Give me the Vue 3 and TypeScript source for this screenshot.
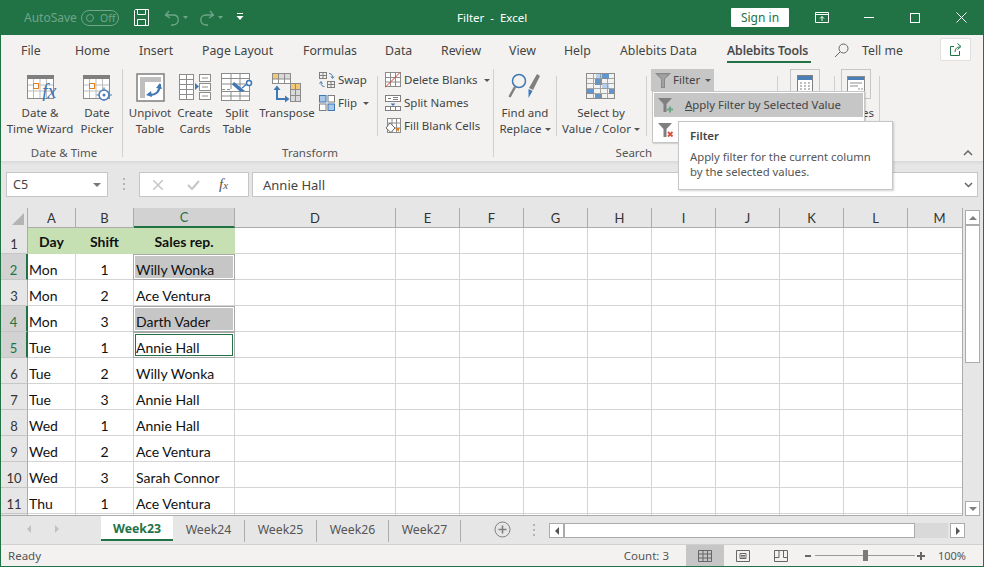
<script setup lang="ts">
interface Row { n: number; a: string; b: string; c: string; mark?: string; sel?: boolean }
const tabs = ['File','Home','Insert','Page Layout','Formulas','Data','Review','View','Help','Ablebits Data','Ablebits Tools']
const columns = ['A','B','C','D','E','F','G','H','I','J','K','L','M']
const rows: Row[] = [
  { n: 2, a: 'Mon', b: '1', c: 'Willy Wonka', mark: 'hit', sel: true },
  { n: 3, a: 'Mon', b: '2', c: 'Ace Ventura' },
  { n: 4, a: 'Mon', b: '3', c: 'Darth Vader', mark: 'hit', sel: true },
  { n: 5, a: 'Tue', b: '1', c: 'Annie Hall', mark: 'active', sel: true },
  { n: 6, a: 'Tue', b: '2', c: 'Willy Wonka' },
  { n: 7, a: 'Tue', b: '3', c: 'Annie Hall' },
  { n: 8, a: 'Wed', b: '1', c: 'Annie Hall' },
  { n: 9, a: 'Wed', b: '2', c: 'Ace Ventura' },
  { n: 10, a: 'Wed', b: '3', c: 'Sarah Connor' },
  { n: 11, a: 'Thu', b: '1', c: 'Ace Ventura' },
]
const blanks = 10
const sheets = ['Week24','Week25','Week26','Week27']
</script>

<template>
  <div class="window">
    <header class="title">
      <div class="qat">
        <span class="autosave">AutoSave</span>
        <span class="toggle"><i></i><b>Off</b></span>
        <svg class="save" width="17" height="17" viewBox="0 0 17 17" fill="none" stroke="#fff"><path d="M2.500.5h13v16h-14v-15zM4.500.5v5h8v-5M4.500 16.500v-6h8v6"/></svg>
        <svg class="undo" width="24" height="16" viewBox="0 0 24 16" fill="none" stroke="#6fa58a" stroke-width="1.300"><path d="M5 1 1.500 5 6 8M2 5h7c7 0 7 9 0 10H7"/><path d="M19 6h5l-2.500 3z" fill="#6fa58a" stroke="none"/></svg>
        <svg class="redo" width="24" height="16" viewBox="0 0 24 16" fill="none" stroke="#6fa58a" stroke-width="1.300"><path d="M11 1l3.500 4L10 8M14 5H7c-7 0-7 9 0 10h2"/><path d="M19 6h5l-2.500 3z" fill="#6fa58a" stroke="none"/></svg>
        <svg class="more" width="8" height="9" viewBox="0 0 8 9" fill="#fff"><rect x="1" width="6" height="1"/><path d="M.5 3h7L4 7z"/></svg>
      </div>
      <div class="doc">Filter&nbsp; -&nbsp; Excel</div>
      <div class="win">
        <button class="signin">Sign in</button>
        <svg class="w-ribbon" width="14" height="11" viewBox="0 0 14 11" fill="none" stroke="#fff"><path d="M.5.500h13v10H.500zM.500 2.500h13M7 9V4.500M5 6.500l2-2 2 2"/></svg>
        <svg class="w-min" width="10" height="1" viewBox="0 0 10 1"><rect width="10" height="1" fill="#fff"/></svg>
        <svg class="w-max" width="10" height="10" viewBox="0 0 10 10" fill="none" stroke="#fff"><rect x=".5" y=".5" width="9" height="9"/></svg>
        <svg class="w-close" width="11" height="11" viewBox="0 0 11 11" stroke="#fff"><path d="M.5.500l10 10M10.500.500l-10 10"/></svg>
      </div>
    </header>

    <nav class="tabs">
      <span v-for="t in tabs" :key="t" :class="{ on: t === 'Ablebits Tools' }">{{ t }}</span>
      <svg class="tell-icon" width="15" height="15" viewBox="0 0 15 15" fill="none" stroke="#666"><circle cx="9.500" cy="5.500" r="4.500"/><path d="M6 9 1 14"/></svg>
      <span class="tell">Tell me</span>
      <span class="share">
        <svg width="13" height="13" viewBox="0 0 13 13" fill="none" stroke="#217346"><path d="M5 3.500H1.500v9h9V8M6 9c0-3 2-5 4-5h1M8.500.500l3.500 3-3.500 3"/></svg>
      </span>
    </nav>

    <section class="ribbon">
      <div class="group g1">
        <div class="body">
          <div class="big w68">
            <span class="ico">
              <svg width="30" height="26" viewBox="0 0 30 26">
                <rect x=".5" y=".5" width="26" height="23" fill="#fff" stroke="#8c8c8c"/><rect width="27" height="4" fill="#7f7f7f"/>
                <path d="M6.500 4v19M13 4v19M19.500 4v19M1 10h25M1 16h25" stroke="#bdbdbd" fill="none"/>
                <rect x="6.500" y="8.500" width="5" height="5" fill="#fff" stroke="#e5801f"/>
                <text x="15" y="23" class="fx-big">fx</text>
              </svg>
            </span>
            <span class="lab">Date &amp;<br>Time Wizard</span>
          </div>
          <div class="big w45">
            <span class="ico">
              <svg width="32" height="26" viewBox="0 0 32 26">
                <rect x="2.500" y=".5" width="26" height="23" fill="#fff" stroke="#8c8c8c"/><rect x="2" width="27" height="4" fill="#7f7f7f"/>
                <path d="M8.500 4v19M15 4v19M21.500 4v19M3 10h25M3 16h25" stroke="#bdbdbd" fill="none"/>
                <rect x="8.500" y="8.500" width="5" height="5" fill="#fff" stroke="#e5801f"/>
                <circle cx="23" cy="20" r="5" fill="#fff" stroke="#4a7fb8" stroke-width="1.600"/><circle cx="23" cy="20" r="1.500" fill="#4a7fb8"/>
                <path d="M23 12.500v3M23 24.500V26M15.500 20h3M28 20h3" stroke="#4a7fb8" stroke-width="1.200"/>
              </svg>
            </span>
            <span class="lab">Date<br>Picker</span>
          </div>
        </div>
        <div class="gl">Date &amp; Time</div>
      </div>

      <div class="group g2">
        <div class="body">
          <div class="big w46">
            <span class="ico">
              <svg width="29" height="29" viewBox="0 0 29 29">
                <rect x="1" y="1" width="27" height="27" fill="#fff" stroke="#7f7f7f" stroke-width="1.500"/>
                <rect x="4" y="4" width="5" height="21" fill="#bfbfbf"/><rect x="4" y="4" width="21" height="5" fill="#bfbfbf"/>
                <path d="M24 11c0 8-4 11-11 11" fill="none" stroke="#3f78b5" stroke-width="2"/><path d="M20 15l4-5 2 6zM15 18l-5 4 6 2z" fill="#3f78b5"/>
              </svg>
            </span>
            <span class="lab">Unpivot<br>Table</span>
          </div>
          <div class="big w44">
            <span class="ico">
              <svg width="33" height="27" viewBox="0 0 33 27" fill="#fff" stroke="#8c8c8c">
                <rect x=".5" y="1.500" width="14" height="25"/><path d="M7.500 2v24M1 6.500h13M1 11.500h13M1 16.500h13M1 21.500h13" fill="none"/>
                <path d="M16 10v7l4-3.500z" fill="#3f78b5" stroke="none"/>
                <rect x="20.500" y="1.500" width="11" height="7"/><rect x="20.500" y="10.500" width="11" height="7"/><rect x="20.500" y="19.500" width="11" height="7"/>
                <path d="M23 5h6M23 14h6M23 23h6" fill="none"/>
              </svg>
            </span>
            <span class="lab">Create<br>Cards</span>
          </div>
          <div class="big w40">
            <span class="ico">
              <svg width="33" height="29" viewBox="0 0 33 29" fill="#fff" stroke="#8c8c8c">
                <rect x=".5" y=".5" width="28" height="27"/>
                <path d="M10 1v15M19 1v15M1 5.500h27M1 11h27M10 19v9M19 19v9M1 23h27" fill="none"/>
                <path d="M1 16.500h9" stroke-dasharray="3 2" fill="none"/><path d="M1 18.500h27" fill="none"/>
                <path d="M13 9l11 9-5 .5-8-7z" fill="#3f78b5" stroke="none"/>
                <circle cx="28" cy="10" r="2.500" fill="#fff" stroke="#3f78b5" stroke-width="1.500"/><path d="M21 15l5-4" stroke="#3f78b5" stroke-width="1.500"/>
              </svg>
            </span>
            <span class="lab">Split<br>Table</span>
          </div>
          <div class="big w60">
            <span class="ico">
              <svg width="30" height="30" viewBox="0 0 30 30" fill="#fff" stroke="#8c8c8c">
                <rect x=".5" y=".5" width="18" height="10"/><rect x="1" y="1" width="5" height="5" fill="#f3c877" stroke="none"/><rect x="7" y="1" width="5" height="5" fill="#d9d9d9" stroke="none"/><rect x="13" y="1" width="5" height="5" fill="#d9d9d9" stroke="none"/>
                <path d="M1 6h18M6.500 1v9M12.500 1v9" fill="none"/>
                <rect x="18.500" y="10.500" width="10" height="18"/><rect x="19" y="11" width="9" height="5" fill="#f3c877" stroke="none"/><rect x="19" y="17" width="9" height="11" fill="#d9d9d9" stroke="none"/>
                <path d="M19 16.500h10M19 22.500h10M23.500 11v18" fill="none"/>
                <path d="M5 15v11h9" fill="none" stroke="#3f78b5" stroke-width="2"/><path d="M1.500 17 5 12.500 8.500 17zM13 22.500l4.500 3.500-4.500 3.500z" fill="#3f78b5" stroke="none"/>
              </svg>
            </span>
            <span class="lab">Transpose</span>
          </div>
          <div class="stack s-swap">
            <div class="small">
              <svg width="16" height="16" viewBox="0 0 16 16" fill="none" stroke="#7f7f7f"><rect x=".5" y=".5" width="7" height="6"/><path d="M4 1v5M1 3.500h6"/><rect x="8.500" y="9.500" width="7" height="6"/><path d="M12 10v5M9 12.500h6"/><path d="M10 1.500c2 0 3.500 1 3.500 4M12 4.500l1.500 2 1.500-2M5.500 14.500c-2 0-3.500-1-3.500-4M.5 11.500l1.500-2 1.500 2" stroke="#3f78b5"/></svg>
              <span>Swap</span>
            </div>
            <div class="small">
              <svg width="16" height="16" viewBox="0 0 16 16" stroke="#7f7f7f" fill="#fff"><rect x=".5" y=".5" width="6.500" height="6.500" fill="#a9c7e6" stroke="#3f78b5"/><rect x="9" y=".5" width="6.500" height="6.500"/><rect x=".5" y="9" width="6.500" height="6.500"/><rect x="9" y="9" width="6.500" height="6.500" fill="#a9c7e6" stroke="#3f78b5"/></svg>
              <span>Flip</span><i class="caret"></i>
            </div>
          </div>
          <i class="vsep"></i>
          <div class="stack s-del">
            <div class="small">
              <svg width="16" height="16" viewBox="0 0 16 16" fill="#fff" stroke="#8c8c8c"><rect x=".5" y=".5" width="15" height="14"/><path d="M5.500 1v13M10.500 1v13M1 5.500h14M1 10h14" fill="none"/><path d="M0 15.500 15 .5" stroke="#d9412b" fill="none"/></svg>
              <span>Delete Blanks</span><i class="caret"></i>
            </div>
            <div class="small">
              <svg width="16" height="16" viewBox="0 0 16 16" fill="#fff" stroke="#7f7f7f"><rect x=".5" y=".5" width="15" height="6"/><path d="M3 3.500h3M8 2.500h5M8 4.500h5" fill="none"/><path d="M5.500 8.500h5L8 11z" fill="#3f78b5" stroke="none"/><rect x=".5" y="11.500" width="15" height="4"/><path d="M5.500 12v3M10.500 12v3" fill="none"/></svg>
              <span>Split Names</span>
            </div>
            <div class="small">
              <svg width="16" height="16" viewBox="0 0 16 16" fill="#fff" stroke="#8c8c8c"><rect x="2.500" y=".5" width="13" height="14"/><path d="M7 1v13M11.500 1v13M3 5h12M3 10h12" fill="none"/><path d="M5 5l5 5-4 4.500-5-4.500z" stroke="#6b6b6b"/><path d="M10.500 10h4l-1 4z" fill="#e5801f" stroke="none"/></svg>
              <span>Fill Blank Cells</span>
            </div>
          </div>
        </div>
        <div class="gl">Transform</div>
      </div>

      <div class="group g3">
        <div class="body">
          <div class="big w56">
            <span class="ico">
              <svg width="34" height="27" viewBox="0 0 34 27" fill="none">
                <circle cx="11" cy="8" r="6.500" stroke="#3f78b5" stroke-width="1.500"/>
                <path d="M7 14 1.500 24" stroke="#7f7f7f" stroke-width="2.500"/>
                <path d="M29 1l3 2-7 14-4-2z" fill="#7f7f7f"/><path d="M20.500 16l4 2-4 7z" fill="#3f78b5"/>
              </svg>
            </span>
            <span class="lab">Find and<br>Replace<i class="caret"></i></span>
          </div>
          <i class="vsep v2"></i>
          <div class="big w90">
            <span class="ico">
              <svg width="30" height="27" viewBox="0 0 30 27" fill="#fff">
                <rect x="10" y="1" width="6" height="6" fill="#b7cfe8"/><rect x="16" y="1" width="7" height="5" fill="#5f96cd"/>
                <rect x="9" y="6" width="7" height="6" fill="#5f96cd"/><rect x="16" y="11" width="7" height="5" fill="#b7cfe8"/>
                <rect x="1" y="16" width="7" height="5" fill="#5f96cd"/><rect x="23" y="16" width="6" height="5" fill="#5f96cd"/><rect x="9" y="21" width="7" height="5" fill="#5f96cd"/>
                <rect x=".5" y=".5" width="28" height="25" fill="none" stroke="#8c8c8c"/>
                <path d="M7.500 1v25M14.500 1v25M21.500 1v25M1 5.500h28M1 10.500h28M1 15.500h28M1 20.500h28" stroke="#8c8c8c" opacity=".75"/>
              </svg>
            </span>
            <span class="lab">Select by<br>Value / Color<i class="caret"></i></span>
          </div>
          <i class="vsep v3"></i>
          <div class="stack s-filter">
            <div class="small filter-btn">
              <svg width="16" height="16" viewBox="0 0 16 16"><path d="M0 1h16l-6 6v9H6V7z" fill="#8a8a8a"/><path d="M3 2.500h10l-4 4.500v8H7V7z" fill="#a2a2a2"/></svg>
              <span>Filter</span><i class="caret"></i>
            </div>
          </div>
          <i class="vsep v4"></i>
          <div class="tool-box b1">
            <svg width="16" height="18" viewBox="0 0 16 18" fill="#fff" stroke="#7f7f7f"><rect x=".5" y=".5" width="15" height="17"/><rect x="1" y="1" width="14" height="4" fill="#4a7fb8" stroke="none"/><path d="M3 8h2M7 8h2M11 8h2M3 11h2M7 11h2M11 11h2M3 14h2M7 14h2M11 14h2" fill="none"/></svg>
          </div>
          <i class="vsep v5"></i>
          <div class="tool-col">
            <div class="tool-box">
              <svg width="18" height="16" viewBox="0 0 18 16" fill="#fff" stroke="#8c8c8c"><rect x=".5" y=".5" width="17" height="15"/><rect x="1" y="1" width="16" height="3" fill="#4a7fb8" stroke="none"/><path d="M3 7h12M3 10h8M11 13h2M14 13h2" fill="none"/></svg>
            </div>
            <span class="es">es</span>
          </div>
          <i class="vsep v6"></i>
        </div>
        <div class="gl gl-search">Search</div>
      </div>
      <svg class="collapse" width="10" height="6" viewBox="0 0 10 6" fill="none" stroke="#666" stroke-width="1.500"><path d="M1 5l4-4 4 4"/></svg>
    </section>

    <section class="fbar">
      <div class="namebox"><span>C5</span><i></i></div>
      <span class="dots"></span>
      <div class="fbtns">
        <svg width="10" height="10" viewBox="0 0 10 10" stroke="#c6c6c6" stroke-width="1.500"><path d="M0 0l10 10M10 0 0 10"/></svg>
        <svg width="13" height="10" viewBox="0 0 13 10" fill="none" stroke="#c6c6c6" stroke-width="2"><path d="M1 5l4 4 7-8"/></svg>
        <span class="fx">f<small>x</small></span>
      </div>
      <div class="finput"><span>Annie Hall</span>
        <svg width="9" height="6" viewBox="0 0 9 6" fill="none" stroke="#666" stroke-width="1.500"><path d="M1 1l3.500 3.500L8 1"/></svg>
      </div>
    </section>

    <section class="work">
      <div class="sheet">
        <div class="corner"><i></i></div>
        <div v-for="c in columns" :key="c" class="ch" :class="{ cur: c === 'C' }">{{ c }}</div>

        <div class="rh">1</div>
        <div class="cell head">Day</div>
        <div class="cell head">Shift</div>
        <div class="cell head">Sales rep.</div>
        <div v-for="i in blanks" :key="'h' + i" class="cell"></div>

        <template v-for="r in rows" :key="r.n">
          <div class="rh" :class="{ cur: r.sel }">{{ r.n }}</div>
          <div class="cell txt first">{{ r.a }}</div>
          <div class="cell num">{{ r.b }}</div>
          <div class="cell txt" :class="r.mark"><span>{{ r.c }}</span></div>
          <div v-for="i in blanks" :key="r.n + '-' + i" class="cell"></div>
        </template>

        <div class="rh"></div>
        <div v-for="c in columns" :key="'x' + c" class="cell"></div>
      </div>
      <div class="vscroll">
        <span class="sb"><i class="up"></i></span>
        <span class="vthumb"></span>
        <span class="sb down"><i class="dn"></i></span>
      </div>
    </section>

    <section class="sheetbar">
      <div class="nav"><i class="l"></i><i class="r"></i></div>
      <div class="sheet-tab active">Week23</div>
      <div v-for="s in sheets" :key="s" class="sheet-tab">{{ s }}</div>
      <svg class="add" width="17" height="17" viewBox="0 0 17 17" fill="none" stroke="#7f7f7f"><circle cx="8.500" cy="8.500" r="7.500"/><path d="M8.500 4.500v8M4.500 8.500h8" stroke-width="1.600"/></svg>
      <span class="dots d2"></span>
      <div class="hscroll">
        <span class="sb"><i class="l dark"></i></span>
        <span class="hthumb"></span>
        <span class="htrack"></span>
        <span class="sb"><i class="r dark"></i></span>
      </div>
    </section>

    <footer class="status">
      <span class="ready">Ready</span>
      <span class="count">Count: 3</span>
      <span class="view on">
        <svg width="14" height="12" viewBox="0 0 14 12" fill="none" stroke="#666"><path d="M.5.500h13v11H.500zM5 .5v11M9.500.5v11M.5 4h13M.5 8h13"/></svg>
      </span>
      <span class="view">
        <svg width="14" height="12" viewBox="0 0 14 12" fill="none" stroke="#666"><path d="M.5.500h13v11H.500zM4 3.500h6v5H4zM5 5.500h4M5 7h4"/></svg>
      </span>
      <span class="view v-last">
        <svg width="14" height="12" viewBox="0 0 14 12" fill="none" stroke="#666"><path d="M.5.500h13v11H.500zM.5 7.500h4.500V.5M9.500.5v7h4"/></svg>
      </span>
      <i class="zm"></i>
      <span class="slider"><i></i></span>
      <i class="zp"></i>
      <span class="pct">100%</span>
    </footer>

    <div class="menu">
      <div class="mi hot">
        <svg width="17" height="15" viewBox="0 0 17 15"><path d="M0 0h14L8.500 6v8h-3V6z" fill="#7f7f7f"/><path d="M12 8.500v6M9 11.500h6" stroke="#6aa884" stroke-width="2"/></svg>
        <span><u>A</u>pply Filter by Selected Value</span>
      </div>
      <div class="mi">
        <svg width="17" height="15" viewBox="0 0 17 15"><path d="M0 0h14L8.500 6v8h-3V6z" fill="#7f7f7f"/><path d="M10 9l4.500 4.500M14.500 9 10 13.500" stroke="#d9503a" stroke-width="1.800"/></svg>
      </div>
    </div>
    <div class="tip">
      <strong>Filter</strong>
      <p>Apply filter for the current column<br>by the selected values.</p>
    </div>
  </div>
</template>

<style>
html, body { margin: 0; background: #fff; }
</style>

<style scoped>
* { box-sizing: border-box; }
i { display: block; font-style: normal; }
.window {
  position: relative; width: 984px; height: 567px; overflow: hidden;
  display: flex; flex-direction: column;
  border: 1px solid #217346; border-top: 0;
  background: #f3f2f1; color: #444;
  font: 11.500px/16px "Noto Sans", sans-serif;
}
.title { flex: 0 0 35px; margin: 0 -1px; background: #217346; display: flex; align-items: center; position: relative; }
.qat { display: flex; align-items: center; padding-left: 24px; }
.autosave { color: #6fa58a; width: 57px; font-size: 12px; }
.toggle { width: 38px; height: 16px; border: 1px solid #6fa58a; border-radius: 8px; display: flex; align-items: center; color: #6fa58a; font-size: 10.500px; padding-left: 4px; gap: 6px; }
.toggle i { width: 8px; height: 8px; border-radius: 50%; border: 1px solid #6fa58a; }
.toggle b { font-weight: 400; }
.save { margin-left: 14px; }
.undo { margin-left: 14px; }
.redo { margin-left: 11px; }
.more { margin-left: 13px; }
.doc { position: absolute; left: 457px; top: 10px; color: #fff; font-size: 11.500px; }
.win { margin-left: auto; display: flex; align-items: center; }
.signin { width: 58px; height: 19px; padding: 0; border: 0; border-radius: 1px; background: #fff; color: #217346; font: 12px/19px "Noto Sans", sans-serif; }
.w-ribbon { margin-left: 26px; }
.w-min { margin-left: 35px; }
.w-max { margin-left: 36px; }
.w-close { margin-left: 36px; margin-right: 17px; }

.tabs { flex: 0 0 33px; display: grid; grid-template-columns: 25px 35px 34px 72px 53px 27px 39px 26px 27px 78px 84px 15px 42px 30px; column-gap: 29px; align-items: start; padding: 8px 0 0 20px; position: relative; white-space: nowrap; font-size: 12.300px; }
.tabs .on { font-weight: 500; color: #444; border-bottom: 2px solid #217346; height: 20px; -webkit-text-stroke: .2px #444; }
.tell-icon { margin: 0 0 0 -6px; }
.tell { margin-left: -22px; }
.share { position: absolute; left: 939px; top: 3px; width: 31px; height: 23px; background: #fff; border: 1px solid #e1dfdd; border-radius: 2px; display: flex; align-items: center; justify-content: center; }

.ribbon { flex: 0 0 93px; display: flex; position: relative; }
.group { display: flex; flex-direction: column; border-right: 1px solid #d0d0d0; margin: 1px 0 4px; }
.body { flex: 1; display: flex; align-items: flex-start; }
.gl { text-align: center; font-size: 11.500px; line-height: 16px; color: #555; margin-bottom: -4px; }
.g1 { width: 122px; padding-left: 5px; }
.g2 { width: 371px; padding-left: 4px; }
.g3 { width: 386px; border-right: 0; padding-left: 3px; }
.g3 .gl { width: 155px; text-align: right; }
.big { display: flex; flex-direction: column; align-items: center; text-align: center; white-space: nowrap; }
.ico { height: 37px; padding-top: 4px; display: flex; align-items: flex-start; justify-content: center; }
.lab { display: block; line-height: 16px; margin-top: -1px; }
.w68 { width: 68px; } .w44 { width: 44px; } .w45 { width: 46px; } .w46 { width: 46px; } .w40 { width: 40px; } .w60 { width: 60px; }
.w56 { width: 56px; } .w90 { width: 76px; margin-left: 6px; }
.w68 .ico { padding-left: 4px; padding-top: 6px; }
.w45 .ico { padding-top: 6px; }
.stack { display: flex; flex-direction: column; padding-top: 0; gap: 1px; }
.small { height: 22px; display: flex; align-items: center; gap: 3px; white-space: nowrap; }
.s-swap { width: 58px; margin-left: 2px; }
.s-del { margin-left: 7px; }
.vsep { width: 1px; height: 60px; background: #d0d0d0; margin-top: 7px; flex: none; }
.v2 { margin-left: 3px; margin-right: 0; }
.caret { display: inline-block; width: 0; height: 0; border: 3px solid transparent; border-top: 3px solid #555; border-bottom: 0; margin-left: 3px; vertical-align: 2px; }
.v3 { margin-left: 7px; }
.s-filter { margin-left: 4px; width: 126px; }
.filter-btn { width: 63px; background: #c6c6c6; padding-left: 4px; margin-top: 0; gap: 2px; }
.tool-box { width: 30px; height: 30px; border: 1px solid #c6c6c6; display: flex; align-items: center; justify-content: center; flex: none; }
.b1 { margin-left: 12px; }
.v5 { margin-left: 14px; }
.tool-col { margin-left: 6px; width: 38px; position: relative; }
.es { position: absolute; left: 21px; top: 36px; }
.v6 { margin-left: 0; }
.collapse { position: absolute; left: 962px; top: 82px; }

.fbar { flex: 0 0 47px; margin: 0; background: linear-gradient(#d9d9d9, #e6e6e6 4px); padding: 11px 5px 11px 5px; display: flex; align-items: stretch; }
.namebox { width: 102px; background: #fff; border: 1px solid #c6c6c6; display: flex; align-items: center; justify-content: space-between; padding: 0 6px; font-size: 12.500px; }
.namebox i { width: 0; height: 0; border: 4px solid transparent; border-top: 4px solid #777; border-bottom: 0; }
.dots { width: 2px; height: 12px; margin: 6px 14px 0 15px; background: repeating-linear-gradient(#b4b4b4 0 2px, transparent 2px 5px); }
.fbtns { width: 110px; background: #fff; border: 1px solid #c6c6c6; display: flex; align-items: center; padding-left: 13px; gap: 24px; }
.fx { font: italic 15px "Liberation Serif", serif; color: #555; margin-left: -5px; }
.fx small { font-size: 11px; }
.finput { margin-left: 3px; flex: 1; background: #fff; border: 1px solid #c6c6c6; display: flex; align-items: center; justify-content: space-between; padding: 0 4px 0 10px; font-size: 13px; }

.work { flex: 0 0 308px; display: flex; background: #e6e6e6; overflow: hidden; }
.sheet { width: 962px; height: 308px; display: grid; grid-template-columns: 27px 48px 58px 101px 161px repeat(8, 64px) 64px; grid-template-rows: 20px repeat(11, 26px) 2px; overflow: hidden; border-bottom: 1px solid #ababab; border-right: 1px solid #ababab; background: #fff; }
.corner { background: #e6e6e6; border-right: 1px solid #ababab; position: relative; }
.corner i { position: absolute; right: 3px; bottom: 3px; width: 0; height: 0; border-left: 12px solid transparent; border-bottom: 12px solid #b4b4b4; }
.ch { background: #e6e6e6; text-align: center; border-right: 1px solid #ababab; border-bottom: 1px solid #ababab; font: 13px/20px Lato, sans-serif; color: #333; }
.ch.cur { background: #d2d2d2; color: #217346; border-bottom: 2px solid #217346; line-height: 19px; }
.rh { background: #e6e6e6; border-right: 1px solid #ababab; border-bottom: 1px solid #c6c6c6; text-align: center; font: 13px/16px Lato, sans-serif; color: #333; display: flex; align-items: flex-end; justify-content: center; padding-bottom: 1px; }
.rh.cur { background: #d2d2d2; color: #217346; border-right: 2px solid #217346; }
.cell { border-right: 1px solid #d4d4d4; border-bottom: 1px solid #d4d4d4; font: 14px/17px Lato, sans-serif; color: #111; display: flex; align-items: flex-end; padding: 0 2px 1px; white-space: nowrap; position: relative; }
.cell.head { background: #c6e0b4; border-color: #c6e0b4; font-weight: 700; justify-content: center; font-size: 14px; padding-bottom: 3px; }
.cell.first { padding-left: 1px; }
.cell.num { justify-content: center; }
.cell.hit { border: 1px solid #a8a8a8; padding: 2px 2px 1px 1px; margin-left: -1px; background: #c6c6c6; box-shadow: inset 0 0 0 1px #fff; }
.cell.hit span, .cell.active span { padding-left: 1px; }
.cell.active { border: 1px solid #a8a8a8; margin-left: -1px; box-shadow: inset 0 0 0 1px #fff, inset 0 0 0 2px #217346; padding: 0 2px 1px 1px; }

.vscroll { flex: 1; display: flex; flex-direction: column; align-items: center; padding: 2px 3px 0 2px; }
.sb { width: 15px; height: 15px; flex: none; background: #fff; border: 1px solid #ababab; display: flex; align-items: center; justify-content: center; }
.up { width: 0; height: 0; border: 4px solid transparent; border-bottom: 4px solid #7f7f7f; border-top: 0; }
.dn { width: 0; height: 0; border: 4px solid transparent; border-top: 4px solid #7f7f7f; border-bottom: 0; }
.vthumb { width: 15px; height: 138px; background: #fff; border: 1px solid #ababab; }
.sb.down { margin-top: auto; margin-bottom: 0; }

.sheetbar { flex: 0 0 29px; background: #e6e6e6; display: flex; align-items: flex-start; position: relative; border-bottom: 1px solid #d0d0d0; }
.nav { width: 100px; height: 25px; display: flex; align-items: center; padding-left: 26px; gap: 24px; }
.l { width: 0; height: 0; border: 4px solid transparent; border-right: 4px solid #c0c0c0; border-left: 0; }
.r { width: 0; height: 0; border: 4px solid transparent; border-left: 4px solid #c0c0c0; border-right: 0; }
.l.dark { border-right-color: #555; } .r.dark { border-left-color: #555; }
.sheet-tab { width: 72px; height: 22px; margin-top: 4px; border-right: 1px solid #ababab; text-align: center; color: #555; font: 12.300px/19px "Noto Sans", sans-serif; }
.sheet-tab.active { height: 25px; margin-top: 0; background: #fff; border-right: 0; color: #217346; font-weight: 700; line-height: 26px; border-bottom: 2px solid #217346; }
.add { margin: 5px 0 0 33px; }
.d2 { margin: 8px 0 0 22px; }
.hscroll { position: absolute; left: 548px; top: 7px; display: flex; height: 15px; }
.hthumb { width: 351px; background: #fff; border: 1px solid #ababab; }
.htrack { width: 33px; background: #d9d9d9; margin-right: 2px; }
.hscroll .sb { width: 15px; }

.status { flex: 1; display: flex; align-items: center; color: #555; font-size: 11.500px; }
.ready { margin-left: 7px; }
.count { margin-left: auto; }
.view { width: 38px; height: 100%; display: flex; align-items: center; justify-content: center; }
.view.on { background: #c6c6c6; margin-left: 17px; }
.zm { width: 6px; height: 2px; background: #666; margin-left: 5px; }
.slider { width: 100px; height: 1px; background: #999; margin-left: 4px; position: relative; }
.slider i { position: absolute; left: 48px; top: -5px; width: 5px; height: 11px; background: #7a7a7a; }
.zp { width: 8px; height: 8px; margin-left: 2px; background: linear-gradient(#666,#666) center/8px 2px no-repeat, linear-gradient(#666,#666) center/2px 8px no-repeat; }
.pct { margin: 0 17px 0 13px; font-size: 11px; }

.menu { position: absolute; left: 651px; top: 91px; width: 213px; height: 52px; background: #fff; border: 1px solid #c6c6c6; padding: 1px; box-shadow: 1px 1px 1px rgba(0,0,0,.12); }
.mi { height: 24px; display: flex; align-items: center; padding-left: 4px; gap: 10px; font-size: 11.400px; }
.mi.hot { background: #c6c6c6; }
.mi svg { flex: none; }
.mi + .mi { margin-top: 1px; }
.tip { position: absolute; left: 677px; top: 121px; width: 215px; height: 69px; background: #fff; border: 1px solid #c6c6c6; padding: 6px 11px; color: #555; box-shadow: 1px 1px 2px rgba(0,0,0,.18); }
.tip strong { display: block; font-size: 11.500px; line-height: 16px; font-weight: 600; color: #444; }
.tip p { margin: 5px 0 0; font-size: 11.300px; line-height: 15px; }
.fx-big { font: italic 20px "Liberation Serif", serif; fill: #3f78b5; }
</style>
